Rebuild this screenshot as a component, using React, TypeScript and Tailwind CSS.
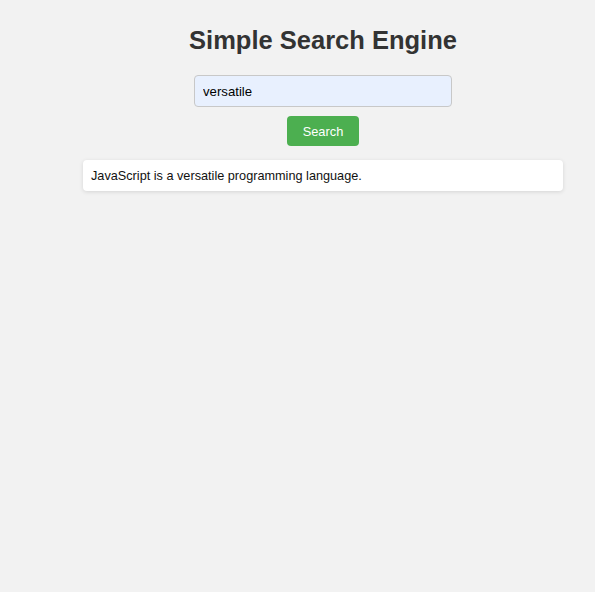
import React from "react";

export default function App() {
  return (
    <div className="min-h-screen bg-[#f2f2f2] font-['Liberation_Sans',Arial,sans-serif]">
      <div className="ml-[83px] w-[480px] pt-[26px] flex flex-col items-center">
        <h1 className="text-[25.5px] leading-[29px] font-bold text-[#333333]">Simple Search Engine</h1>
        <input
          readOnly
          value="versatile"
          className="mt-[20px] w-[258px] h-[32px] px-[8px] border border-[#c8c8c8] rounded-[4px] bg-[#e8f0fe] text-[13.2px] text-black outline-none font-['Liberation_Sans',Arial,sans-serif]"
        />
        <button className="mt-[9px] w-[72px] h-[30px] pt-[2px] rounded-[4px] bg-[#4caf50] text-white text-[12.8px] font-['Liberation_Sans',Arial,sans-serif]">
          Search
        </button>
        <div className="mt-[14px] self-stretch bg-white rounded-[4px] px-[8px] pt-[9px] pb-[7px] text-[12.7px] leading-[15px] text-[#111] shadow-[0_1px_4px_rgba(0,0,0,0.12)]">
          JavaScript is a versatile programming language.
        </div>
      </div>
    </div>
  );
}
